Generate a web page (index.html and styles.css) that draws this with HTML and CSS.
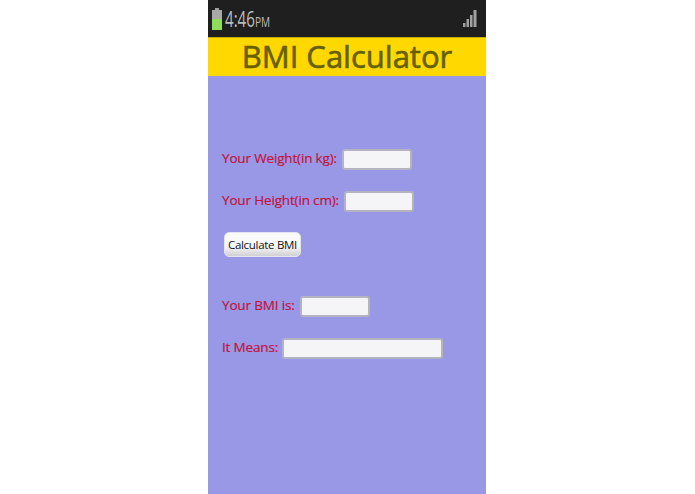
FILE: index.html
```html
<!DOCTYPE html>
<html lang="en">
<head>
    <meta charset="UTF-8">
    <meta name="viewport" content="width=device-width, initial-scale=1.0">
    <title>BMI Calculator</title>
    <link rel="stylesheet" href="styles.css">
</head>
<body>
    <div class="phone">
        <div class="status-bar">
            <svg class="battery" width="10" height="22" viewBox="0 0 10 22">
                <rect x="3" y="0" width="4" height="3" fill="#a0a0a0"/>
                <rect x="0" y="2" width="10" height="9" fill="#a8a8a8"/>
                <rect x="0" y="11" width="10" height="11" fill="#8fdc5a"/>
            </svg>
            <span class="clock">4:46<small>PM</small></span>
            <svg class="signal" width="14" height="18" viewBox="0 0 14 18">
                <rect x="0" y="13" width="2.5" height="4" fill="#a0a0a0"/>
                <rect x="3.5" y="9" width="2.5" height="8" fill="#a0a0a0"/>
                <rect x="7" y="5" width="2.5" height="12" fill="#a0a0a0"/>
                <rect x="10.5" y="0" width="3" height="17" fill="#a0a0a0"/>
            </svg>
        </div>
        <h1 class="title">BMI Calculator</h1>
        <div class="form">
            <div class="row row-weight">
                <label>Your Weight(in kg):</label>
                <input class="field" type="text">
            </div>
            <div class="row row-height">
                <label>Your Height(in cm):</label>
                <input class="field" type="text">
            </div>
            <button class="calc-btn">Calculate BMI</button>
            <div class="row row-bmi">
                <label>Your BMI is:</label>
                <input class="field" type="text">
            </div>
            <div class="row row-means">
                <label>It Means:</label>
                <input class="field field-wide" type="text">
            </div>
        </div>
    </div>
</body>
</html>
```

FILE: styles.css
```css
html, body {
    margin: 0;
    padding: 0;
    height: 100%;
    background-color: #fff;
    overflow: hidden;
}

body {
    display: flex;
    justify-content: flex-start;
    font-family: 'Open Sans', 'Noto Sans', sans-serif;
}

.phone {
    width: 278px;
    height: 494px;
    margin-left: 208px;
    display: flex;
    flex-direction: column;
    background-color: #9898e6;
}

.status-bar {
    height: 37px;
    flex-shrink: 0;
    display: flex;
    align-items: center;
    padding: 0 9px 0 4px;
    background-color: #1f1f1f;
    color: #bcbcbc;
}

.battery {
    margin-bottom: -1px;
}

.clock {
    margin: 4px 0 0 3px;
    font-size: 21px;
    line-height: 24px;
    transform: scaleX(0.72);
    transform-origin: left center;
}

.clock small {
    font-size: 14px;
}

.signal {
    margin: 0 0 0 auto;
}

.title {
    height: 39px;
    flex-shrink: 0;
    margin: 0;
    background-color: #ffd800;
    border-top: 1px solid #c8ac00;
    box-sizing: border-box;
    color: #666000;
    font-size: 31px;
    font-weight: 400;
    line-height: 36px;
    text-align: center;
    -webkit-text-stroke: 0.6px #666000;
}

.form {
    display: flex;
    flex-direction: column;
    align-items: flex-start;
    padding: 73px 0 0 14px;
}

.row {
    display: flex;
    align-items: center;
    height: 21px;
    color: #c0143c;
    font-size: 13.5px;
    letter-spacing: -0.16px;
    white-space: nowrap;
    -webkit-text-stroke: 0.2px #c0143c;
}

.row label {
    margin-right: 5.5px;
    padding-bottom: 3px;
}

.row-height {
    margin-top: 21px;
}

.row-bmi {
    margin-top: 39px;
}

.row-means {
    margin-top: 21px;
}

.row-means label {
    margin-right: 3.5px;
}

.field {
    width: 70px;
    height: 21px;
    box-sizing: border-box;
    padding: 0;
    background-color: #f5f5f8;
    border: 2px solid #b4b4c0;
    border-radius: 3px;
}

.field-wide {
    width: 161px;
}

.calc-btn {
    width: 77px;
    height: 25px;
    margin: 20px 0 0 2px;
    padding: 0;
    background: linear-gradient(to bottom, #fafafa 55%, #d0d0d4);
    border: 1px solid #e4e4f0;
    border-radius: 5px;
    color: #111;
    font-family: 'Open Sans', sans-serif;
    font-size: 11.5px;
    letter-spacing: -0.3px;
}
```
